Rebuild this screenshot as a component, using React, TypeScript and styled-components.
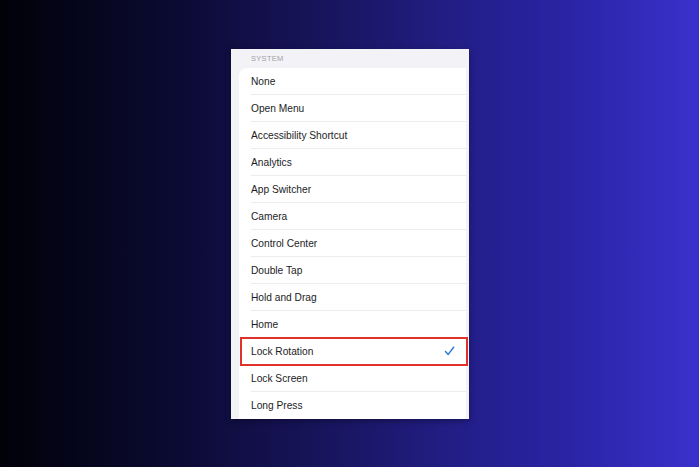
import styled, { createGlobalStyle } from 'styled-components';

const GlobalStyle = createGlobalStyle`
  html, body {
    margin: 0;
    padding: 0;
  }
  body {
    font-family: 'Liberation Sans', Arial, sans-serif;
  }
`;

const Backdrop = styled.div`
  width: 699px;
  height: 467px;
  display: flex;
  align-items: center;
  justify-content: center;
  background: linear-gradient(90deg, #010108 0%, #0b0a32 25%, #17145a 45%, #221e86 65%, #2a24a6 82%, #3a31cc 100%);
`;

const Panel = styled.div`
  width: 238px;
  height: 370px;
  margin-left: 1px;
  background: #f2f2f7;
  padding: 0 3px 0 8px;
  box-sizing: border-box;
  overflow: hidden;
  display: flex;
  flex-direction: column;
  box-shadow: 0 2px 6px rgba(0, 0, 0, 0.35);
`;

const SectionHeader = styled.div`
  height: 19px;
  flex-shrink: 0;
  padding-left: 12px;
  display: flex;
  align-items: center;
  font-size: 7.5px;
  letter-spacing: 0.3px;
  color: #a3a3a8;
  text-transform: uppercase;
`;

const Card = styled.div`
  background: #fff;
  border-top-left-radius: 8px;
  display: flex;
  flex-direction: column;
`;

const Row = styled.div<{ $highlight?: boolean }>`
  position: relative;
  height: 27px;
  flex-shrink: 0;
  padding: 0 11px 0 12px;
  display: flex;
  align-items: center;
  justify-content: space-between;
  font-size: 10.2px;
  color: #1c1c1e;

  &:not(:last-child)::after {
    content: '';
    position: absolute;
    left: 12px;
    right: 0;
    bottom: 0;
    height: 1px;
    background: #ececee;
  }

  ${({ $highlight }) =>
    $highlight &&
    `
    &::before {
      content: '';
      position: absolute;
      left: 1px;
      right: -2px;
      top: -1px;
      bottom: -1px;
      border: 2px solid #e1312b;
      z-index: 1;
    }
  `}
`;

const Check = styled.svg`
  width: 11px;
  height: 10px;
`;

const items = [
  'None',
  'Open Menu',
  'Accessibility Shortcut',
  'Analytics',
  'App Switcher',
  'Camera',
  'Control Center',
  'Double Tap',
  'Hold and Drag',
  'Home',
  'Lock Rotation',
  'Lock Screen',
  'Long Press',
];

const selected = 'Lock Rotation';

export default function App() {
  return (
    <>
      <GlobalStyle />
      <Backdrop>
        <Panel>
          <SectionHeader>System</SectionHeader>
          <Card>
            {items.map((label) => (
              <Row key={label} $highlight={label === selected}>
                <span>{label}</span>
                {label === selected && (
                  <Check viewBox="0 0 11 10">
                    <path
                      d="M1.5 5.5 L4.2 8.4 L9.6 1.2"
                      fill="none"
                      stroke="#2f7bd1"
                      strokeWidth="1.5"
                      strokeLinecap="round"
                      strokeLinejoin="round"
                    />
                  </Check>
                )}
              </Row>
            ))}
          </Card>
        </Panel>
      </Backdrop>
    </>
  );
}
